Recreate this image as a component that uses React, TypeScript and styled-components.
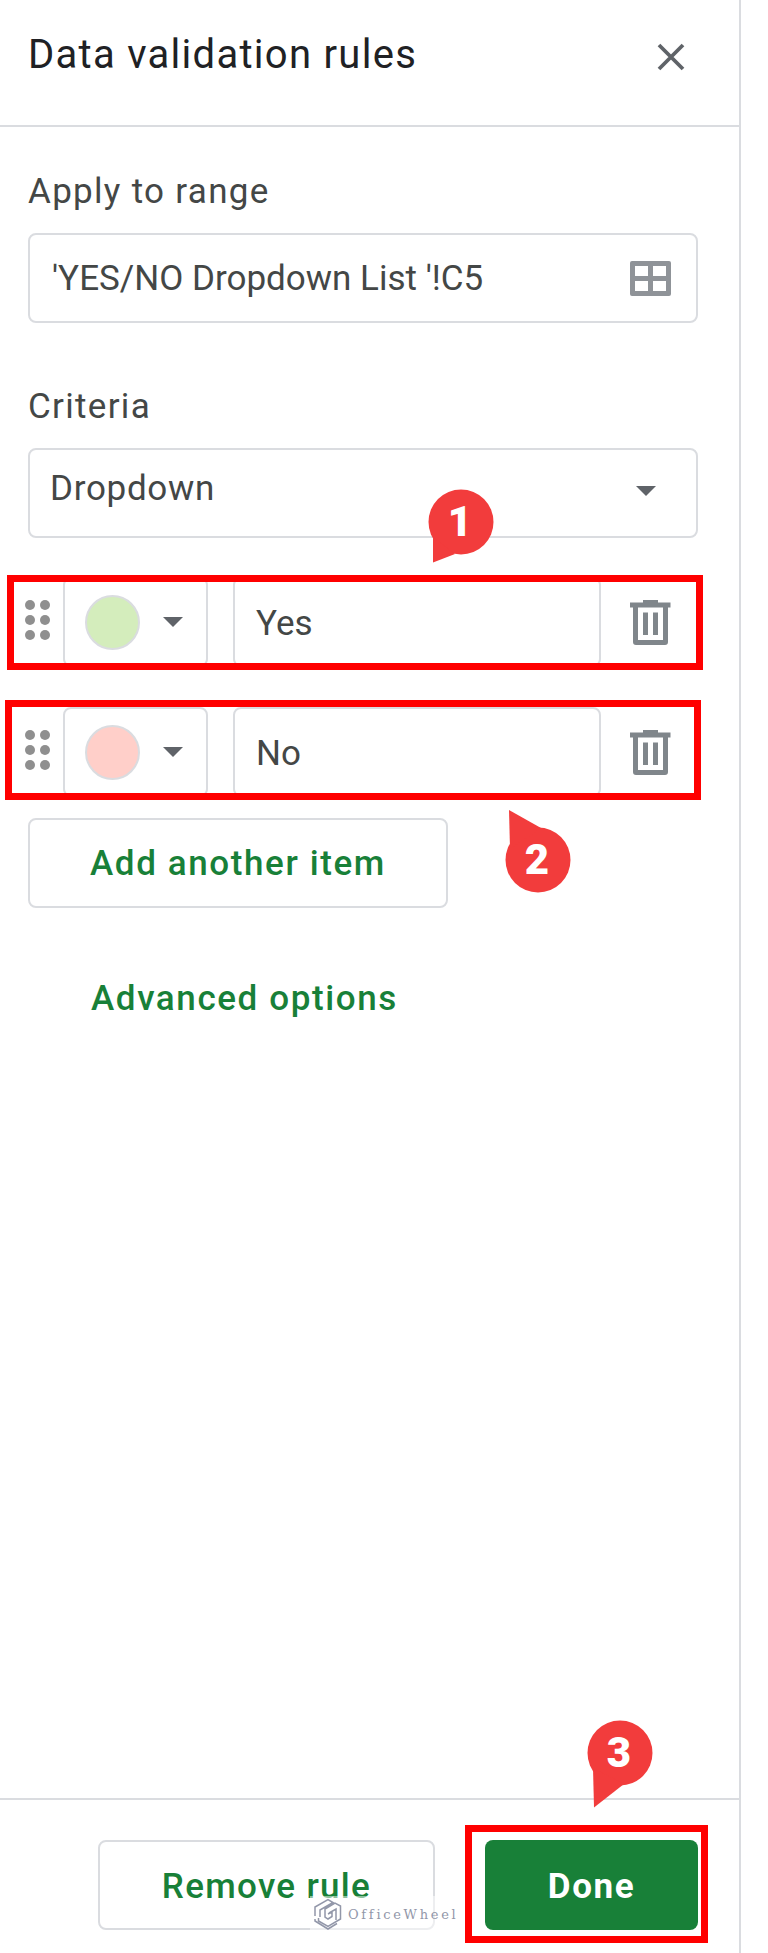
import React from 'react';
import styled, { createGlobalStyle } from 'styled-components';

const GlobalStyle = createGlobalStyle`
  * { box-sizing: border-box; }
  body { margin: 0; background: #fff; font-family: Roboto, "Liberation Sans", sans-serif; color: #444746; }
  button { font: inherit; padding: 0; background: none; border: 0; cursor: pointer; }
`;

const line = '#dadce0';

const Panel = styled.main`
  position: relative;
  display: flex;
  flex-direction: column;
  width: 741px;
  height: 1953px;
  border-right: 2.5px solid ${line};
`;

const Header = styled.header`
  display: flex;
  justify-content: space-between;
  align-items: flex-start;
  height: 127px;
  padding: 30px 54px 0 28px;
  border-bottom: 2.5px solid ${line};
`;

const Title = styled.h1`
  margin: 1px 0 0;
  font-size: 40px;
  line-height: 47px;
  font-weight: 400;
  color: #202124;
  letter-spacing: 1.28px;
  white-space: nowrap;
`;

const CloseButton = styled.button`
  width: 28px;
  height: 28px;
  margin-top: 13px;
  svg { display: block; }
`;

const Body = styled.section`
  display: flex;
  flex-direction: column;
  align-items: flex-start;
  flex: 1;
  padding-left: 28px;
`;

const Label = styled.div<{ $top: number }>`
  height: 42px;
  margin: ${p => p.$top}px 0 20px;
  font-size: 35px;
  line-height: 42px;
  letter-spacing: 1.3px;
  white-space: nowrap;
`;

const Field = styled.div<{ $left: number; $right: number }>`
  display: flex;
  justify-content: space-between;
  align-items: center;
  width: 670px;
  height: 90px;
  padding: 0 ${p => p.$right}px 0 ${p => p.$left}px;
  border: 2.5px solid ${line};
  border-radius: 8px;
`;

const Value = styled.span<{ $spacing?: number; $up?: number; $down?: number }>`
  font-size: 35px;
  line-height: 42px;
  letter-spacing: ${p => p.$spacing ?? 0}px;
  padding: ${p => p.$down ?? 0}px 0 ${p => p.$up ?? 0}px;
  white-space: nowrap;
`;

const CaretSlot = styled.span`
  display: flex;
  padding-bottom: 4px;
`;

const Highlight = styled.div<{ $w: number; $h: number; $ml: number; $mt: number }>`
  display: flex;
  flex: none;
  width: ${p => p.$w}px;
  height: ${p => p.$h}px;
  margin: ${p => p.$mt}px 0 0 ${p => p.$ml}px;
  border: 7.5px solid #ff0000;
  overflow: hidden;
`;

const ItemRow = styled.div<{ $ml: number; $mt: number }>`
  display: flex;
  flex: none;
  align-items: center;
  height: 90px;
  margin: ${p => p.$mt}px 0 0 ${p => p.$ml}px;
`;

const Handle = styled.span`
  display: flex;
  padding-bottom: 4px;
`;

const ColorSelect = styled.div`
  display: flex;
  align-items: center;
  width: 145px;
  height: 90px;
  margin: 0 25px 0 13px;
  padding-left: 20px;
  gap: 23px;
  border: 2px solid ${line};
  border-radius: 8px;
`;

const Swatch = styled.span<{ $color: string }>`
  width: 55px;
  height: 55px;
  border: 2.5px solid ${line};
  border-radius: 50%;
  background: ${p => p.$color};
`;

const ItemInput = styled.div`
  display: flex;
  align-items: center;
  width: 368px;
  height: 90px;
  margin-right: 29px;
  padding-left: 21px;
  border: 2px solid ${line};
  border-radius: 8px;
`;

const OutlineButton = styled.button<{ $w: number; $spacing: number }>`
  width: ${p => p.$w}px;
  height: 90px;
  border: 2.5px solid ${line};
  border-radius: 8px;
  color: #188038;
  font-size: 35px;
  font-weight: 500;
  letter-spacing: ${p => p.$spacing}px;
  white-space: nowrap;
`;

const AddButton = styled(OutlineButton)`
  margin-top: 18px;
`;

const AdvancedLink = styled(OutlineButton)`
  margin-top: 45px;
  border-color: transparent;
  text-align: left;
  padding-left: 61px;
`;

const Footer = styled.footer`
  display: flex;
  height: 155px;
  border-top: 2.5px solid ${line};
  padding: 25px 0 0 98px;
`;

const RemoveButton = styled(OutlineButton)`
  margin-top: 15px;
  padding-top: 2px;
`;

const DoneFrame = styled.div`
  display: flex;
  width: 243px;
  height: 118px;
  margin-left: 30px;
  padding: 8px 0 0 13px;
  border: 7.5px solid #ff0000;
`;

const DoneButton = styled.button`
  width: 213px;
  height: 90px;
  padding-top: 3px;
  border-radius: 8px;
  background: #188038;
  color: #fff;
  font-size: 35px;
  font-weight: 700;
  letter-spacing: 1.6px;
`;

const Pin = styled.div<{ $x: number; $y: number }>`
  position: absolute;
  left: ${p => p.$x}px;
  top: ${p => p.$y}px;
  width: 66px;
  height: 66px;
  display: flex;
  align-items: center;
  justify-content: center;
  color: #fff;
  font-size: 42px;
  line-height: 66px;
  font-weight: 900;
  svg { position: absolute; left: 0; top: 0; overflow: visible; }
`;

const PinText = styled.span`
  position: relative;
  padding-right: 2px;
`;

const Watermark = styled.div`
  position: absolute;
  left: 310px;
  top: 1896px;
  display: flex;
  align-items: center;
  gap: 6px;
  height: 36px;
  width: 150px;
  padding-left: 4px;
  background: rgba(255, 255, 255, 0.5);
  color: #9297a9;
  font-family: "DejaVu Serif", serif;
  font-size: 13px;
  letter-spacing: 2.7px;
  svg { flex: none; }
`;

const Caret = () => (
  <svg width="20" height="10" viewBox="0 0 20 10"><path d="M0 0H20L10 10Z" fill="#5f6368" /></svg>
);

const DragHandle = () => (
  <svg width="25" height="40" viewBox="0 0 25 40" fill="#8f8f8f">
    {[5, 20, 35].map(y => [5, 20].map(x => <circle key={`${x}-${y}`} cx={x} cy={y} r="5" />))}
  </svg>
);

const Trash = () => (
  <svg width="41" height="45" viewBox="0 0 41 45" fill="#80868b">
    <path d="M13 0H28V2.5H40.5V7.5H38V42Q38 45 35 45H6Q3 45 3 42V7.5H0V2.5H13ZM8 7.5V40H33V7.5Z" fillRule="evenodd" />
    <path d="M13 12.5H18V35H13ZM23 12.5H28V35H23Z" />
  </svg>
);

const GridIcon = () => (
  <svg width="41" height="35" viewBox="0 0 41 35">
    <path d="M2 0H39Q41 0 41 2V33Q41 35 39 35H2Q0 35 0 33V2Q0 0 2 0ZM5 5V15H18V5ZM23 5V15H36V5ZM5 20V30H18V20ZM23 20V30H36V20Z" fill="#8f9398" fillRule="evenodd" />
  </svg>
);

const Item = ({ color, text, ml, mt }: { color: string; text: string; ml: number; mt: number }) => (
  <ItemRow $ml={ml} $mt={mt}>
    <Handle><DragHandle /></Handle>
    <ColorSelect><Swatch $color={color} /><Caret /></ColorSelect>
    <ItemInput><Value $down={3}>{text}</Value></ItemInput>
    <Trash />
  </ItemRow>
);

const NumberPin = ({ n, x, y, tail }: { n: number; x: number; y: number; tail: string }) => (
  <Pin $x={x} $y={y}>
    <svg width="66" height="66" fill="#f23c3c">
      <circle cx="33" cy="33" r="32.5" />
      <path d={tail} />
    </svg>
    <PinText>{n}</PinText>
  </Pin>
);

export default function App() {
  return (
    <>
      <GlobalStyle />
      <Panel>
        <Header>
          <Title>Data validation rules</Title>
          <CloseButton aria-label="Close">
            <svg width="28" height="28" viewBox="0 0 28 28"><path d="M2 2L26 26M26 2L2 26" stroke="#5f6368" strokeWidth="3.8" /></svg>
          </CloseButton>
        </Header>
        <Body>
          <Label $top={44}>Apply to range</Label>
          <Field $left={22} $right={25}>
            <Value $down={2}>{"'YES/NO Dropdown List '!C5"}</Value>
            <GridIcon />
          </Field>
          <Label $top={63}>Criteria</Label>
          <Field $left={20} $right={40}>
            <Value $up={8} $spacing={0.7}>Dropdown</Value>
            <CaretSlot><Caret /></CaretSlot>
          </Field>
          <Highlight $w={696} $h={95} $ml={-21} $mt={37}>
            <Item color="#d4edbc" text="Yes" ml={11} mt={-5} />
          </Highlight>
          <Highlight $w={696} $h={100} $ml={-23} $mt={30}>
            <Item color="#ffcfc9" text="No" ml={13} mt={0} />
          </Highlight>
          <AddButton $w={420} $spacing={1.6}>Add another item</AddButton>
          <AdvancedLink $w={430} $spacing={1.6}>Advanced options</AdvancedLink>
        </Body>
        <Footer>
          <RemoveButton $w={337} $spacing={1.3}>Remove rule</RemoveButton>
          <DoneFrame><DoneButton>Done</DoneButton></DoneFrame>
        </Footer>
        <NumberPin n={1} x={428} y={489} tail="M5 48V73.5L27 65Z" />
        <NumberPin n={2} x={505} y={827} tail="M4 -17L5 22L36 1Z" />
        <NumberPin n={3} x={587} y={1720} tail="M6 48L7 87.5L37 64Z" />
        <Watermark>
          <svg width="28" height="32" viewBox="0 0 28 32" fill="none" stroke="#9297a9" strokeWidth="1.5">
            <path d="M1 18V9L14 1.5L19 4.5L6 12V19M4.5 20V23L14 28.5L26.5 21V8L21 5L11 11V19L14 21L18 18.5V14L14 16M1 21V23L14 31L23 25.5M22 22V11L15 15" />
          </svg>
          OfficeWheel
        </Watermark>
      </Panel>
    </>
  );
}
